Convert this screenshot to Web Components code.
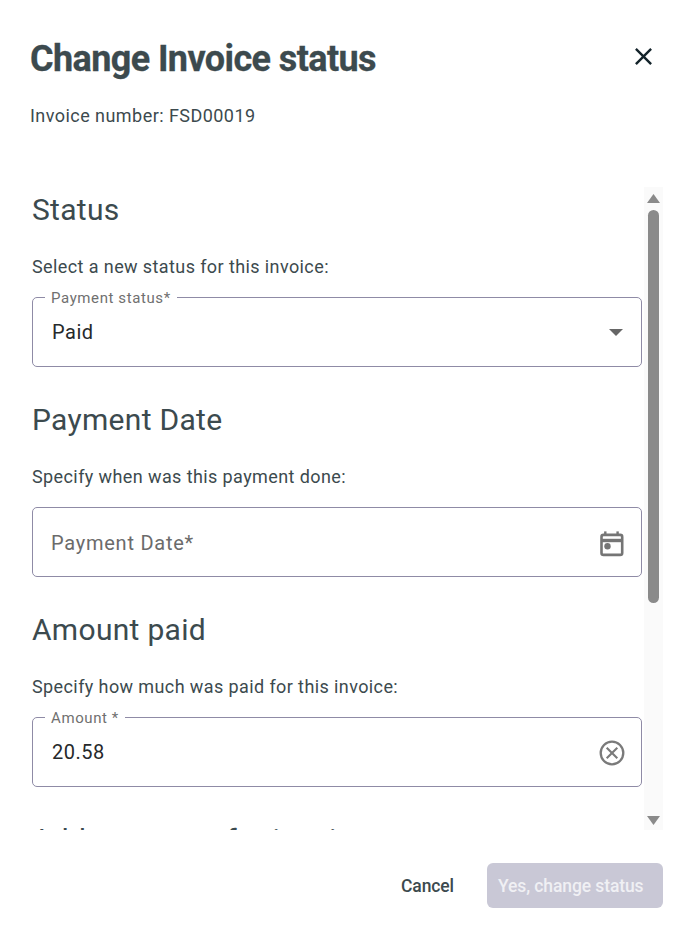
<!DOCTYPE html>
<html><head><meta charset="utf-8"><style>
html,body{margin:0;padding:0;background:#fff;height:100%;overflow:hidden}
body{font-family:Roboto,sans-serif}
</style></head><body>
<template id="t-dialog"><style>
:host{display:flex;flex-direction:column;width:695px;height:937px;box-sizing:border-box;background:#fff;color:#3c4a4e;overflow:hidden}
header{display:flex;justify-content:space-between;align-items:flex-start;padding:37px 37px 0 30px;height:44px}
h1{margin:0;font:700 36px/44px Roboto,sans-serif;letter-spacing:-.6px;color:#3c4a4e;-webkit-text-stroke:.3px #3c4a4e}
.sub{margin:21px 0 0 30px;font:400 18px/28px Roboto,sans-serif;letter-spacing:.45px;color:#3c4a4e;height:28px}
.bodywrap{margin:57px 32px 0 32px;height:643px;display:flex}
.scroll{flex:1;overflow:hidden;min-width:0}
footer{display:flex;justify-content:flex-end;align-items:center;gap:33px;padding:33px 32px 0 0}
</style>
<header><h1><slot name="title"></slot></h1><slot name="close"></slot></header>
<div class="sub"><slot name="sub"></slot></div>
<div class="bodywrap"><div class="scroll"><slot></slot></div><slot name="bar"></slot></div>
<footer><slot name="actions"></slot></footer>
</template>

<template id="t-section"><style>
:host{display:block;height:210px}
h2{margin:0;padding-top:3px;font:400 30px/40px Roboto,sans-serif;letter-spacing:.3px;color:#3c4a4e;white-space:nowrap}
p{margin:0;padding-top:23px;font:400 18px/28px Roboto,sans-serif;letter-spacing:.4px;color:#3c4a4e}
.f{margin-top:16px}
</style><h2></h2><p></p><div class="f"><slot></slot></div></template>

<template id="t-field"><style>
:host{display:block;position:relative;width:610px;height:70px;box-sizing:border-box;border:1px solid #8f8ba6;border-radius:5px;font-family:Roboto,sans-serif}
.row{display:flex;align-items:center;justify-content:space-between;height:68px;padding:0 0 0 19px}
.val{font-size:20px;letter-spacing:.5px;color:#26292b}
.ph{font-size:20px;letter-spacing:.75px;color:#6b6b6b;margin-left:-1px;margin-top:2px}
.lab{position:absolute;left:12px;top:-8px;padding:0 6px;background:#fff;font-size:15px;line-height:16px;letter-spacing:.6px;color:#707070}
::slotted(svg){display:block}
</style><span class="lab" hidden></span><div class="row"><span class="txt"></span><slot></slot></div></template>

<template id="t-bar"><style>
:host{display:flex;flex-direction:column;align-items:center;width:19px;height:643px;background:#fafafa;flex:none}
svg{display:block}
.top{margin-top:6px}
.thumb{width:11px;height:393px;margin-top:6px;background:#8a8a8a;border-radius:5.5px}
.bot{margin-top:auto;margin-bottom:4px}
</style>
<svg class="top" width="13" height="11" viewBox="0 0 13 11"><path d="M6.5 1 13 10H0z" fill="#8a8a8a"/></svg>
<div class="thumb"></div>
<svg class="bot" width="13" height="11" viewBox="0 0 13 11"><path d="M0 1h13L6.5 10z" fill="#8a8a8a"/></svg>
</template>

<template id="t-btn"><style>
:host{display:inline-flex;align-items:center;height:45px;box-sizing:border-box;border-radius:6px;font:500 17.5px/24px Roboto,sans-serif;letter-spacing:-.1px}
:host([kind=text]){color:#3c4a4e;width:53px;justify-content:center}
:host([kind=dis]){background:#c9c8d6;color:#f0f0f4;width:176px;padding-left:11px}
</style><slot></slot></template>

<script>
const def=(n,init)=>customElements.define(n,class extends HTMLElement{constructor(){super();const s=this.attachShadow({mode:'open'});s.appendChild(document.getElementById('t-'+n.split('-')[1]).content.cloneNode(true));}connectedCallback(){init&&init(this,this.shadowRoot)}});
def('x-dialog');
def('x-bar');
def('x-btn');
def('x-section',(h,s)=>{s.querySelector('h2').textContent=h.getAttribute('heading');s.querySelector('p').textContent=h.getAttribute('hint')||''});
def('x-field',(h,s)=>{const l=s.querySelector('.lab'),t=s.querySelector('.txt');if(h.hasAttribute('label')){l.hidden=false;l.textContent=h.getAttribute('label')}if(h.hasAttribute('value')){t.className='val';t.textContent=h.getAttribute('value')}else{t.className='ph';t.textContent=h.getAttribute('placeholder')}});
</script>

<x-dialog>
<span slot="title">Change Invoice status</span>
<svg slot="close" width="29" height="29" viewBox="0 0 24 24" style="display:block;margin-top:5px"><path d="M19 6.41 17.59 5 12 10.59 6.41 5 5 6.41 10.59 12 5 17.59 6.41 19 12 13.41 17.59 19 19 17.59 13.41 12z" fill="#14242b"/></svg>
<span slot="sub">Invoice number: FSD00019</span>
<x-section heading="Status" hint="Select a new status for this invoice:">
<x-field label="Payment status*" value="Paid"><svg style="margin-right:13px" width="24" height="24" viewBox="0 0 24 24"><path d="M5 9h14l-7 7z" fill="#666"/></svg></x-field>
</x-section>
<x-section heading="Payment Date" hint="Specify when was this payment done:">
<x-field placeholder="Payment Date*"><svg style="margin-right:17px;margin-top:3px" width="24" height="26" viewBox="0 0 24 26" fill="#757575"><rect x="1.5" y="3.9" width="20.7" height="20" rx="2" fill="none" stroke="#757575" stroke-width="2.6"/><rect x="1.5" y="7.8" width="20.7" height="3.4"/><rect x="4.1" y=".4" width="2.4" height="3.5"/><rect x="16.4" y=".4" width="2.4" height="3.5"/><circle cx="7.5" cy="15.2" r="3.2"/></svg></x-field>
</x-section>
<x-section heading="Amount paid" hint="Specify how much was paid for this invoice:">
<x-field label="Amount *" value="20.58"><svg style="margin-right:16.5px;margin-top:2px" width="26" height="26" viewBox="0 0 26 26" fill="none" stroke="#7a7a7a"><circle cx="13" cy="13" r="11.3" stroke-width="2.3"/><path d="M7.7 7.7 18.3 18.3M18.3 7.7 7.7 18.3" stroke-width="2.1"/></svg></x-field>
</x-section>
<x-section heading="Add message for invoice"></x-section>
<x-bar slot="bar"></x-bar>
<x-btn slot="actions" kind="text">Cancel</x-btn>
<x-btn slot="actions" kind="dis">Yes, change status</x-btn>
</x-dialog>
</body></html>
